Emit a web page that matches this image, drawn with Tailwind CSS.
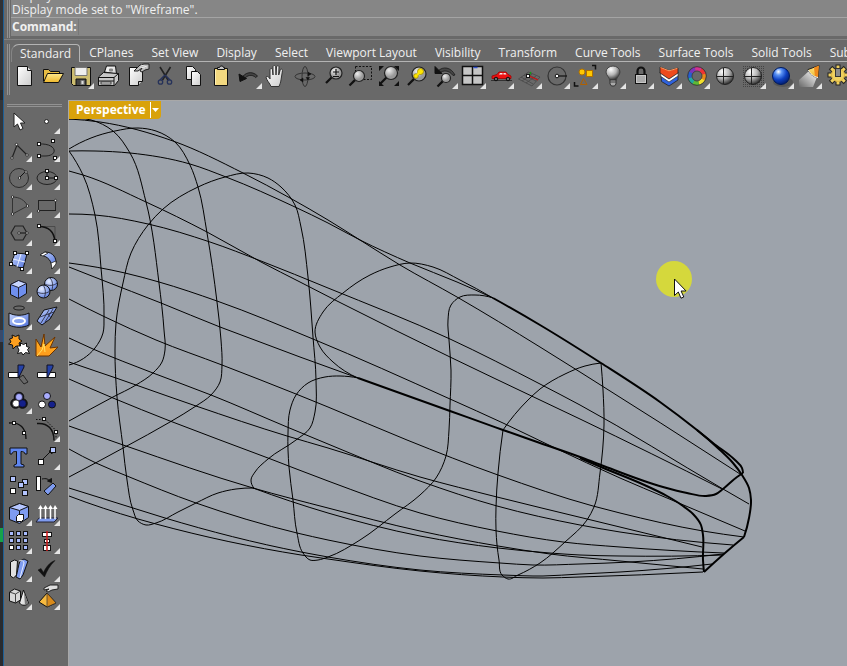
<!DOCTYPE html>
<html lang="en">
<head>
<meta charset="utf-8">
<title>Perspective</title>
<script src="https://cdn.jsdelivr.net/npm/@tailwindcss/browser@4"></script>
</head>
<body class="flex h-screen overflow-hidden bg-[#696969] font-['Open_Sans','Noto_Sans',sans-serif] text-xs text-[#f0f0f0]">
<div class="w-1 shrink-0 border-r border-[#1d5f96] bg-[linear-gradient(#303236_0_90px,#26282c_90px_100px,#34363a_100px_330px,#3a4a6a_330px_342px,#2b2d31_342px_440px,#303338_440px_528px,#16a34a_528px_542px,#292b2f_542px)]"></div>
<div class="flex min-w-0 flex-1 flex-col">
  <section class="flex h-10 shrink-0 border-b border-[#828282] pl-[3px]" aria-label="Command line">
    <div class="mr-px h-[38px] w-[3px] border-x border-[#929292]"></div>
    <div class="flex min-w-0 flex-1 flex-col">
      <div class="flex h-[18px] flex-col justify-end overflow-hidden border-b border-[#a4a4a4] bg-[#868686] pl-px leading-[14px]">
        <p class="shrink-0">Display</p>
        <p class="shrink-0 whitespace-nowrap">Display mode set to "Wireframe".</p>
      </div>
      <div class="flex h-[18px] items-center bg-[#868686] pl-px">
        <label for="cmd" class="font-bold leading-4">Command:</label>
        <input id="cmd" class="ml-px h-4 min-w-0 flex-1 border-l border-[#787878] bg-transparent px-1 outline-none">
      </div>
    </div>
  </section>
  <header class="flex h-[60px] shrink-0 pt-1 pl-[3px]">
    <div class="h-[51px] w-[3px] shrink-0 border-x border-[#929292]"></div>
    <div class="flex min-w-0 flex-1 flex-col">
      <nav id="tabs" class="flex h-[18px] shrink-0 overflow-hidden whitespace-nowrap pl-px" role="tablist"></nav>
      <div id="top" class="flex overflow-hidden pl-px" role="toolbar" aria-label="Standard"></div>
    </div>
  </header>
  <div class="flex min-h-0 flex-1">
    <aside class="w-16 shrink-0 pt-1">
      <div class="ml-[3px] h-[3px] w-[55px] border-y border-[#929292]"></div>
      <div id="side" class="ml-px grid w-14 grid-cols-2" role="toolbar" aria-label="Main"></div>
    </aside>
    <main class="relative min-w-0 flex-1 overflow-hidden border-l border-t border-[#a8a8a8] bg-[#9da3ab]">
      <svg id="view" class="block h-[566px] w-[778px]" viewBox="69 101 778 566" fill="none" stroke="#000" aria-label="Wireframe model"></svg>
      <button class="absolute left-0 top-0 flex h-[18px] items-center rounded-br-sm bg-[#d9a20b] pl-[7px] font-bold text-white">Perspective<span class="ml-1 flex h-4 w-[11px] items-center justify-center border-l border-white"><svg class="h-1 w-[7px]" viewBox="0 0 7 4"><path d="M0 0h7L3.500 4z" fill="#fff"/></svg></span></button>
    </main>
  </div>
</div>

<svg class="absolute h-0 w-0" aria-hidden="true">
  <defs>
    <linearGradient id="paper" x2="1" y2="1"><stop stop-color="#fff"/><stop offset="1" stop-color="#ccc"/></linearGradient>
    <linearGradient id="gold" x2="0" y2="1"><stop stop-color="#ffe98c"/><stop offset="1" stop-color="#efb82b"/></linearGradient>
    <linearGradient id="blue" x2="1" y2="1"><stop stop-color="#c9d8ff"/><stop offset="1" stop-color="#4a6cd8"/></linearGradient>
    <linearGradient id="fire" x2="0" y2="1"><stop stop-color="#ffb020"/><stop offset="1" stop-color="#ff9c1c"/></linearGradient>
    <linearGradient id="beam" x1="1" y1="0" x2="0" y2="1"><stop stop-color="#fff"/><stop offset="1" stop-color="#fff" stop-opacity="0"/></linearGradient>
    <radialGradient id="lens" cx=".35" cy=".3"><stop stop-color="#eee"/><stop offset="1" stop-color="#999"/></radialGradient>
    <radialGradient id="ball" cx=".35" cy=".25" r=".8"><stop stop-color="#fff"/><stop offset=".5" stop-color="#b4b4b4"/><stop offset="1" stop-color="#222"/></radialGradient>
    <radialGradient id="bball" cx=".35" cy=".25" r=".8"><stop stop-color="#fff"/><stop offset=".25" stop-color="#5b93f5"/><stop offset=".6" stop-color="#0d3fc0"/><stop offset="1" stop-color="#021a66"/></radialGradient>
    <radialGradient id="sball" cx=".35" cy=".3" r=".8"><stop stop-color="#e6edff"/><stop offset="1" stop-color="#5578dd"/></radialGradient>
    <pattern id="dots" width="2" height="2" patternUnits="userSpaceOnUse"><rect width="1" height="1" fill="#444"/></pattern>
  </defs>
</svg>

<script>
const P = (d, f = 'none', s = '#111', w = 1) => `<path d="${d}" fill="${f}" stroke="${s}" stroke-width="${w}"/>`;
const C = (x, y, r, f = 'none', s = '#111', w = 1) => `<circle cx="${x}" cy="${y}" r="${r}" fill="${f}" stroke="${s}" stroke-width="${w}"/>`;
const R = (x, y, w, h, f = '#fff', s = '#111', sw = 1) => `<rect x="${x}" y="${y}" width="${w}" height="${h}" fill="${f}" stroke="${s}" stroke-width="${sw}"/>`;
const H = (...p) => p.map(([x, y]) => R(Math.floor(x) - 1.5, Math.floor(y) - 1.5, 3, 3)).join('');
const D = (...p) => p.map(([x, y]) => C(x, y, 1.2, '#fff', '#111', .8)).join('');
const G = (x, y, r, f) => P(`M${x - r * .7} ${y + r * .7}L${x - r - 4} ${y + r + 4}`, 'none', '#111', 2.2) + C(x, y, r, f || 'url(#lens)', '#222', 1.2);
const tri = '<path d="M27 21v6h-6z" fill="#e4e4e4"/>';

const top_ = [
 ['New', P('M6.500 4.500h10l4 4v15h-14z', 'url(#paper)') + P('M16.500 4.500v4h4', '#ddd')],
 ['Open', P('M4.500 19V7.500h5l2 2h9v3', '#e8bd42') + P('M4.500 20.500l4-9h16l-5 9z', 'url(#gold)')],
 ['Save', P('M4.500 5.500h19v18h-17l-2-2z', '#cdbd70') + P('M8 5.500h12v8H8z', '#eee', '#777') + P('M9 17h10v6.500H9z', '#444') + R(14, 18.500, 3, 4, '#ddd', '#777'), 1],
 ['Print', P('M9.500 10l2-6h9l1 8z', 'url(#paper)') + P('M3.500 15l5-4.500 15 1v7l-4 5h-16z', '#c8c8c8') + P('M3.500 15.500h15.500l4.500-4M19 15.500v8M4 19h15', 'none') + R(6, 20, 10, 2, '#eee', '#222', .8) + P('M14.500 7h3v2h-3z', '#888', '#888')],
 ['Properties', P('M6.500 5.500h13v14l-4 4h-9z', 'url(#paper)') + P('M15.500 23.500v-4h4', '#bbb') + P('M11 9l6-6 4-1h5v5l-4 1-3 2-2-1 2-3-4 3z', '#bbb', '#222') + P('M17 5l5 1M18 3l6 2', 'none', '#fff', .7)],
 ['Cut', P('M9 5l8 13M19.500 5l-8 13', 'none', '#222', 1.6) + P('M14 13l-5 5M14 13l5 5', 'none', '#26325a', 1.5) + C(9.500, 20, 2.200, 'none', '#26325a', 1.3) + C(18.500, 20, 2.200, 'none', '#26325a', 1.3)],
 ['Copy', P('M7.500 4.500h6l3 3v10h-9z', 'url(#paper)') + P('M12.500 9.500h6l3 3v11h-9z', 'url(#paper)')],
 ['Paste', P('M7.500 6.500h13v17h-13z', '#f3d980') + P('M8.500 8v14.500', 'none', '#fff0b5') + P('M10.500 7.500v-2h2l1-1.500h2l1 1.500h1v2z', '#c8c8c8')],
 ['Undo', P('M7 16c2-5 10-8 15.500-2l-1.800 1.500C17 12 12 13 9.500 17z', '#444', '#111', .8) + P('M4 12l1 7.500 6.500-3z', '#111'), 1],
 ['Pan', P('M8 24.500c-1-3-5-7-5-9.500 1-1.500 3 0 4 2V8c0-2 2.300-2 2.500 0l.5 5V5c0-2 2.500-2 2.700 0l.3 8 .5-8c.2-2 2.600-1.500 2.500 0l-.3 8 1.500-5c.6-1.500 2.600-1 2.300.5L18 18c-.5 3-1 4-2 6.500z', 'url(#paper)', '#333')],
 ['Rotate view', '<ellipse cx="14" cy="14.500" rx="10" ry="3.500" fill="none" stroke="#333"/><ellipse cx="14" cy="14.500" rx="3" ry="10" fill="none" stroke="#333"/>' + P('M9 18l3-2v4zM20 12l-3-2v4zM17 18l-2-2.500h3.500z', '#111', '#111', .5)],
 ['Zoom dynamic', G(17, 11, 6) + P('M14 10h6M17 7v6M14 14.500h6', 'none', '#111', 1.2)],
 ['Zoom window', '<rect x="8.500" y="4.500" width="16" height="13" fill="none" stroke="#111" stroke-dasharray="2 1.500"/>' + G(12, 14, 5.500)],
 ['Zoom extents', G(16, 11, 6.500) + P('M4 4h5l-5 5zM24 4v5l-5-5zM4 24v-5l5 5zM24 24h-5l5-5z', '#111', 'none')],
 ['Zoom selected', G(16, 12, 7) + C(17.500, 9.500, 3, '#ffe600', '#a08a00', .8) + C(13, 14, 2.300, '#ffe600', '#a08a00', .8) + P('M14 13l2.500-2.500', 'none', '#ffe600', 2)],
 ['Undo view', P('M7 9c5-5 13-4 17 4l-2 .5C18 8 12 8 9 11z', '#444', '#111', .7) + P('M4 4.500v7h7z', '#111') + G(15, 16, 4.500), 1],
 ['Four viewports', R(3.500, 4.500, 20, 18, '#c6c6c6', '#111', 1.500) + P('M13.500 4v19M3 13.500h21', 'none', '#111', 1.500) + P('M14.500 5.500h4', 'none', '#3050d0', 1.500), 1],
 ['Car', P('M4 18.500h21', 'none', '#333', 1) + P('M5 16.500v-2.500l5-1.500 2-2.500h7l2 2.500 3 1.500v2.500z', '#ee1111', '#a00000', .8) + P('M12 12.500l1-1.500h2.500v1.500zM16.500 11h2l1 1.500h-3z', '#eee', 'none') + C(9, 17, 1.800, '#222') + C(21, 17, 1.800, '#222') + C(9, 17, .7, '#eee', 'none') + C(21, 17, .7, '#eee', 'none'), 1],
 ['Set CPlane', P('M3.500 17l10-7 11.500 5-8 9zM6 15l12 7M9 13l12 6M11 11.500l12 6M7 19l10-7M11 21l10-7', 'none', '#444', .7) + P('M14 14l9 4', 'none', '#d01010', 1.3) + P('M14 14l2-4', 'none', '#10a010', 1.2) + H([13.500, 14]), 1],
 ['Set view', C(14, 14, 9, 'none', '#333', 1.2) + P('M14 14h10', 'none', '#111', 1.2) + C(14, 14, 1.800, '#fff'), 1],
 ['Select', P('M21 3.500h3.500v4M3.500 20v4h4', 'none', '#111', 1.500) + C(11, 10, 3, '#ffc800', '#b07000') + R(15.500, 8.500, 6, 6, '#ffc800', '#b07000') + P('M12.500 16.500l3.500 6H9.500z', 'none', '#b06000'), 1],
 ['Hide', P('M10.500 18c0-3-3.500-4.500-3.500-8a7 6 0 0 1 14 0c0 3.500-3.500 5-3.500 8z', 'url(#ball)', '#444') + P('M11 18h6v4l-1.500 2h-3L11 22z', '#aaa', '#333') + P('M11 20h6', 'none', '#444'), 1],
 ['Lock', P('M10.500 12V9a3.500 3.500 0 0 1 7 0v3', 'none', '#111', 2.200) + R(8.500, 12.500, 11, 9, '#c8c8c8') + P('M10 15h8M10 17h8M10 19h8', 'none', '#888', .9), 1],
 ['Layers', P('M6 14l8 5.500 9-6v4.500l-9 6-7.500-4.500z', '#2f62dc', '#222', .8) + P('M5 10l9 6 9-6v4l-9 6-8-5.500z', '#fff', '#222', .6) + P('M5 5l9 3.500 9-2.500v5l-9 6-9-6z', '#ee4a1c', '#222', .8) + P('M5.500 5.500l8.500 3.300 8.500-2.500', 'none', '#ff9a60'), 1],
 ['Color', ['#e33', '#e8891a', '#f2df2c', '#5cba35', '#23a8a0', '#285fd0', '#7a35b8', '#d23390'].map((c, i) => `<circle cx="14" cy="14" r="7.200" fill="none" stroke="${c}" stroke-width="4" stroke-dasharray="5.800 100" transform="rotate(${i * 45 - 60} 14 14)"/>`).join('') + C(14, 14, 9.300, 'none', '#222', .7) + C(14, 14, 5, 'none', '#333', .7), 1],
 ['Shade', C(14, 14, 8.500, 'url(#ball)', '#222') + P('M6 14.500h16', 'none', '#222') + P('M12.500 6v16', 'none', '#222')],
 ['Shade selected', '<rect x="3" y="3" width="23" height="23" fill="url(#dots)"/>' + C(14, 14, 8.500, 'url(#ball)', '#222') + P('M6 14.500h16', 'none', '#222') + P('M12.500 6v16', 'none', '#222'), 1],
 ['Render', '<ellipse cx="16" cy="20" rx="10" ry="5" fill="#444" fill-opacity=".5"/>' + C(14, 14, 8.500, 'url(#bball)', '#001a5c'), 1],
 ['Spotlight', P('M14 9l8 6-4 10H4V18z', 'url(#beam)', 'none') + P('M13 7.500l11-4 -1 12c-4 0-9-4-10-8z', 'url(#gold)', '#222') + P('M19 5.500l5-2-1 12-3-1z', '#f08a1c', 'none') + P('M13.500 8c1 3 5 7 9.500 7.500', 'none', '#fff'), 1],
 ['Options', Array.from({length: 8}, (_, i) => `<rect x="13" y="3" width="4" height="5" fill="#eed060" stroke="#222" transform="rotate(${i * 45} 15 13)"/>`).join('') + C(15, 13, 6.500, '#eed060', '#e0b840') + R(12.500, 6.500, 5, 8, '#8a8a8a', '#333')],
];

const side = [
 ['Pointer', P('M9 6v14l3.500-3 2.500 6 3-1.500-2.500-5.500h4.500z', '#fff', '#222')],
 ['Point', C(13.500, 14.500, 2, '#fff', '#222'), 1],
 ['Polyline', P('M7 23l5-13 10 10', 'none', '#222', 1.200) + D([7, 23], [11.500, 9.500], [22, 20]), 1],
 ['Curve', P('M6 9c18-1 20 12 6 12H6', 'none', '#222') + H([6, 9], [20, 6], [6, 21], [22, 23]), 1],
 ['Circle', C(14, 15, 9.500, 'none', '#2a2a2a') + P('M14 15l7-7', 'none') + D([14.500, 15], [21, 9]), 1],
 ['Ellipse', '<ellipse cx="14" cy="15" rx="10" ry="6.500" fill="none" stroke="#222"/>' + P('M14 15V8M14 15h9', 'none') + H([14, 8], [14, 15], [23, 15]), 1],
 ['Arc', P('M7.500 6v17l15-8C20 9 14 6 7.500 6z', 'none', '#333') + D([7.500, 6], [7.500, 23], [22.500, 15]), 1],
 ['Rectangle', R(5.500, 9.500, 17, 10, 'none', '#222') + D([22.500, 9.500], [5.500, 20]), 1],
 ['Polygon', P('M6 14l4-7h8l4 7-4 7h-8z', 'none', '#222', 1.200) + P('M14 14h8', 'none') + D([14, 14], [22, 14]), 1],
 ['Fillet', P('M6 7.500h16v15', 'none', '#444', .8) + P('M6 7.500c10 0 15 5 16 15', 'none', '#111', 1.500) + H([6, 7.500], [22, 22.500]), 1],
 ['Surface from points', P('M10 6l12 1-4 15L6 17z', 'url(#blue)') + P('M16 7l-4 13M8 12l12 3', 'none', '#e6edff') + H([10, 6], [22, 6], [6, 17], [17, 22]), 1],
 ['Loft', P('M7 8l5-3c9 0 11 7 11 10l-4 7c0-8-4-13-12-14z', 'url(#blue)') + P('M7 8l5-3 3 1-5 3zM18 16l5-2v3l-4 5z', '#fff', '#222', .8), 1],
 ['Box', P('M5.500 9.500l8-4 8 3v10l-8 5-8-4z', '#6f8fee') + P('M5.500 9.500l8-4 8 3-8 4z', '#c7d5ff', '#223') + P('M13.500 12.500v11', 'none', '#223'), 1],
 ['Sphere', C(18, 9, 6.500, 'url(#sball)') + C(10.500, 16.500, 6.500, 'url(#sball)') + P('M4 17c4 2 9 2 13-1M10 10c3 4 3 9 1 13M12 9c3 2 9 2 12-1M17 3c3 3 3 8 2 12', 'none', '#223', .8), 1],
 ['Revolve', '<ellipse cx="14" cy="5" rx="5.500" ry="2" fill="none" stroke="#222"/>' + P('M4 10c6 3 14 3 20 0v12c-6 3-14 3-20 0z', 'url(#blue)') + '<ellipse cx="14" cy="18" rx="6" ry="3" fill="#8aa5f0" stroke="#fff" stroke-width="2"/>', 1],
 ['Surface tools', P('M4 18l7-11 13-3-7 12-8 6z', 'url(#blue)') + P('M7 14l8-3 6-2M8 20l8-13M12 19l8-13M15 11l3 4', 'none', '#223', .8), 1],
 ['Explode', P('M4.500 8l3-1-.5-3 3.500 1.500 3.500-1.500v4l3 2-3 2 1 4-4-1-3 3-.5-4-4-1 2.500-2z', '#ffa01e') + P('M12 15l3.500 0 0-3 3 1.500 3-1.500 0 3.500 3 1-2 2 2 4-4-1-2.500 2.500-1.500-2.500-4 1 1.500-3.500z', '#fff')],
 ['Explode blocks', P('M3 25V8l5 8 3-13 1 12 10-9-5 11 8-1-9 9z', 'url(#fire)', '#6b3300') + P('M4 25l5-6 2-6 1 8', 'none', '#ffe060')],
 ['Trim', P('M3.500 13.500h11v5h-11z', '#fff') + P('M13 6h6v2l-5 10h-1z', '#2442a8', '#112') + P('M14 19l4-3 5 7-4 2z', 'none', '#222')],
 ['Split', P('M4.500 13.500h18v5h-18z', '#fff') + P('M14 6h6v2l-5 10h-1z', '#2442a8', '#112')],
 ['Group', C(14, 10, 4.800, '#111') + C(10.500, 16.500, 4.800, '#111') + C(17.500, 16.500, 4.800, '#111') + C(14, 10, 3.500, '#a9adff', '#224', .7) + C(11, 16.500, 3.500, '#fff', '#222', .7) + C(17.500, 16.500, 3.500, '#14208a', '#114', .7), 1],
 ['Ungroup', C(14, 9, 3.500, '#a9adff') + C(9, 17.500, 3.500, '#fff') + C(19, 17.500, 3.500, '#14208a')],
 ['Curve points', P('M4 8c11-1 17 5 17 16', 'none', '#111', 1.300) + H([9, 8.500], [19, 18])],
 ['Control points', P('M4 8.500c11-1 17 6 17 17', 'none', '#111', 1.500) + '<path d="M3 4.500h9l11 11v8" fill="none" stroke="#111" stroke-dasharray="1.500 1.500"/>' + H([11, 4.500], [23, 17]), 1],
 ['Text', P('M5 5h17v6h-2c-.5-2-1.500-2.500-4-2.500V21l3 1v2H9v-2l2.500-1V8.500C8 8.500 7.500 9 7 11H5z', '#5f86f0')],
 ['Move', P('M8 18L19 7', 'none') + P('M16 8l3-1v4z', '#111') + R(5.500, 16.500, 5, 5, '#fff') + R(17.500, 4.500, 5, 5, '#b4c5ff'), 1],
 ['Copy objects', R(5.500, 5.500, 5, 5, '#b4c5ff') + R(17.500, 8.500, 5, 5, '#b4c5ff') + R(13.500, 11.500, 5, 5, '#b4c5ff') + R(5.500, 17.500, 5, 5, '#fff') + R(17.500, 19.500, 5, 5, '#b4c5ff')],
 ['Rotate', R(3.500, 5.500, 4, 14, '#fff') + P('M9 8c4-1 7 0 8 3', 'none') + P('M14.500 10l4 1.500v-4z', '#111') + P('M11 20l9-8 3 3-8 9z', '#7f9cf0')],
 ['Boolean', P('M4.500 8.500l10-4 9 3v11l-9 6-10-4z', '#7f9cf0') + P('M4.500 8.500l10-4 9 3-9 4z', '#b5c6ff') + P('M14.500 12v8', 'none') + P('M11.500 17.500l2-2h5v5l-2 2h-5z', '#fff'), 1],
 ['Extrude', P('M3 23l3-4h19l-4 4z', '#7f9cf0', '#223') + P('M7.500 20V8M12.500 20V8M17.500 20V8M22 20V8', 'none', '#fff', 1.500) + P('M5 10l2.500-4 2.500 4zM10 10l2.500-4 2.500 4zM15 10l2.500-4 2.500 4zM20 10l2-4 2.500 4z', '#fff', 'none'), 1],
 ['Array', [5, 12, 19].map(y => [5, 12, 19].map(x => R(x - .5, y - .5, 4, 4, y == 19 && x == 5 ? '#fff' : '#a9bcff')).join('')).join(''), 1],
 ['Align', R(9.500, 5.500, 9, 4, '#fff') + R(11.500, 12.500, 5, 3, '#fff') + R(10.500, 18.500, 7, 5, '#fff') + P('M14 4v20', 'none', '#d01818', 1.500), 1],
 ['Bend', P('M5.500 7l4-2 3 1-1 14-3 3-3-2z', '#e0e0e0') + P('M15 6l4-2 4 2-5 14-3 4-4-2c2-6 2-11 4-16z', '#7f9cf0') + P('M14 6c3-1 5 0 5 2l-4 15', 'none', '#e6edff'), 1],
 ['Check', P('M5 15l3-1.500 2.500 4C13 12 17 7 22 5.500c-5 5-8 10-10.500 16.500z', '#111', '#111', .5), 1],
 ['Solids', P('M4.500 9l5-3 6 2v9l-5 3-6-2z', '#d8d8d8') + P('M4.500 9l6 2 5-3M10.500 11v9', 'none', '#444') + P('M18.500 7l5 13c-2 3-7 3-9 0z', 'url(#paper)') + P('M19 9l4 11-3 2z', '#777', 'none'), 1],
 ['Help', P('M6 19l8-9 9 10-9 4z', '#f6b93f') + P('M14 10v14l9-4z', '#d98a1a', '#333', .7) + P('M11 5l6-3h8v4l-6 1-4 2-2-1 3-2-5 1z', '#ddd', '#222'), 1],
];

const button = ([name, art, more]) => `<button class="block h-7 w-7 shrink-0" title="${name}" aria-label="${name}"><svg class="h-7 w-7" viewBox="0 0 28 28">${art}${more ? tri : ''}</svg></button>`;
document.getElementById('top').innerHTML = top_.map(button).join('');
document.getElementById('side').innerHTML = side.map(button).join('');

const tabs = ['Standard', 'CPlanes', 'Set View', 'Display', 'Select', 'Viewport Layout', 'Visibility', 'Transform', 'Curve Tools', 'Surface Tools', 'Solid Tools', 'Sub'];
document.getElementById('tabs').innerHTML = tabs.map((t, i) => i
  ? `<button class="h-[18px] shrink-0 border-b border-[#b4b4b4] px-[9px] pt-px leading-4" role="tab">${t}</button>`
  : `<button class="h-[18px] shrink-0 rounded-tl-lg rounded-tr border-t border-r border-l border-[#b4b4b4] border-l-[#858585] px-2 leading-4" role="tab" aria-selected="true">${t}</button>`).join('') + '<div class="flex-1 border-b border-[#b4b4b4]"></div>';

// Smooth curve through a flat list of x,y values; tangents follow the circle through three neighbours
function spline(s) {
  const n = s.trim().split(/[\s,]+/).map(Number), p = [];
  for (let i = 0; i < n.length; i += 2) p.push([n[i], n[i + 1]]);
  const unit = ([x, y]) => { const m = Math.hypot(x, y) || 1; return [x / m, y / m]; };
  const len = (a, b) => Math.hypot(b[0] - a[0], b[1] - a[1]);
  const dir = (a, b) => unit([b[0] - a[0], b[1] - a[1]]);
  const last = p.length - 1, t = [];
  for (let i = 1; i < last; i++) {
    const l1 = len(p[i - 1], p[i]), l2 = len(p[i], p[i + 1]), u = dir(p[i - 1], p[i]), v = dir(p[i], p[i + 1]);
    t[i] = unit([u[0] * l2 + v[0] * l1, u[1] * l2 + v[1] * l1]);
  }
  const mirror = (c, v) => { const k = 2 * (c[0] * v[0] + c[1] * v[1]); return [k * c[0] - v[0], k * c[1] - v[1]]; };
  t[0] = last > 1 ? mirror(dir(p[0], p[1]), t[1]) : dir(p[0], p[1]);
  t[last] = last > 1 ? mirror(dir(p[last - 1], p[last]), t[last - 1]) : t[0];
  let d = `M${p[0]}`;
  for (let i = 0; i < last; i++) {
    const b = p[i], c = p[i + 1], l = len(b, c) / 3;
    d += `C${b[0] + t[i][0] * l} ${b[1] + t[i][1] * l} ${c[0] - t[i + 1][0] * l} ${c[1] - t[i + 1][1] * l} ${c}`;
  }
  return d;
}
const thin = [
 '69,151 83,175 95,215 101,268 104,317 103,333 95,348 69,365',
 '69,119 91,120 113,131 130,153 146,202 159,283 164,330 165,350 162,362 153,373 136,385 113,397 69,421',
 '69,149 91,138 115,131 138,128 156,131 175,142 190,165 198,187 207,233 217,302 221,340 222,365 220,382 211,395 196,406 170,422 125,447 69,477',
 '254,488 251,480 255,472 268,459 296,440 310,428 315,412 316,380 313,337 308,277 301,227 295,205 281,187 268,178 248,173 225,177 198,187 163,209 148,225 131,253 123,283 116,323 115,350 117,397 123,447 127,480 133,510 138,521 146,525 156,523 178,512 196,503 218,493 236,489 254,488',
 '358,378 333,362 320,347 315,332 323,312 343,293 370,275 390,267 410,263 433,267 460,280 493,298',
 '493,298 475,295 460,297 451,305 448,320 449,340 451,370 450,405 449,430 446,456 436,478 420,495 395,514 360,540 328,557 318,560 310,560 303,553 297,533 293,500 289,467 288,433 290,410 296,395 308,383 325,377 340,376 358,378',
 '601,363 585,366 565,374 540,389 528,400 503,430', '503,430 498,473 496,507 496,530 499,560 502,575 508,579 518,575 540,563 565,542 587,520 594,507 600,473 604,425 603,390 601,363',
 '69,119 100,122 173,141 243,173 290,198 328,220 360,240 400,265 457,297 540,347 580,372 740,474',
 '69,151 95,151 130,153 190,164 226,177 295,207 328,223 360,240 410,263 457,282 493,298',
 '69,171 83,175 146,202 207,232 261,262 300,282 337,301 450,357 540,400 580,419 722,489',
 '69,214 95,215 148,224 210,242 261,261 328,288 450,339 540,384 580,405 723,489 749,504',
 '69,263 125,273 159,282 217,301 313,339 450,399 503,423 553,447 620,478 667,498 745,531',
 '69,267 102,280 161,303 220,327 252,339 300,357 358,378',
 '69,299 105,317 156,340 222,365 296,394 328,407 407,440 498,475 593,506 620,513 703,531 744,537',
 '69,338 93,349 153,373 211,395 287,427 328,444 420,481 497,506 580,525 620,532 733,545',
 '69,362 116,378 136,385 196,406 287,436 328,448 420,477 497,497 587,519 702,547',
 '69,379 113,398 170,421 268,458 328,481 420,513 497,531 563,542 620,547 724,553',
 '69,426 126,446 253,488 328,508 420,531 498,546 550,554 620,561 703,569',
 '253,488 328,513 420,536 498,548 550,553 580,555 620,556 723,555',
 '69,449 96,463 127,476 196,503 297,533 328,540 420,556 500,563 533,565 580,564 630,562 723,554',
 '69,488 133,508 165,518 301,552 328,557 420,570 503,575 543,576 580,574 620,572 712,564',
 '69,496 138,519 156,524 301,555 328,559 420,571 503,577 543,578 580,577 703,572',
];
const thick = [
 '358,378 450,411 503,430 540,443 580,457 601,465 663,487 687,493 706,496 716,494 723,489 737,477 743,473',
 '493,298 540,325 601,363 660,402 697,430 713,443 735,460 742,468 743,473',
 '697,430 720,450 733,463 742,475 749,488 751,500 749,518 744,537', '744,537 725,553 704,572',
 '704,572 703,560 703,535 701,525 693,514 683,506 667,496 640,483 601,467 580,458',
];
document.getElementById('view').innerHTML =
  thin.map(s => `<path d="${spline(s)}"/>`).join('') +
  thick.map(s => `<path d="${spline(s)}" stroke-width="2" stroke-linejoin="round"/>`).join('') +
  '<circle cx="674" cy="279" r="18" fill="#d5d83c" stroke="none"/><path d="M674.500 279v16.500l3.800-3.500 2.700 6.200 2.800-1.200-2.700-6h5z" fill="#fff" stroke="#111"/>';
</script>
</body>
</html>
